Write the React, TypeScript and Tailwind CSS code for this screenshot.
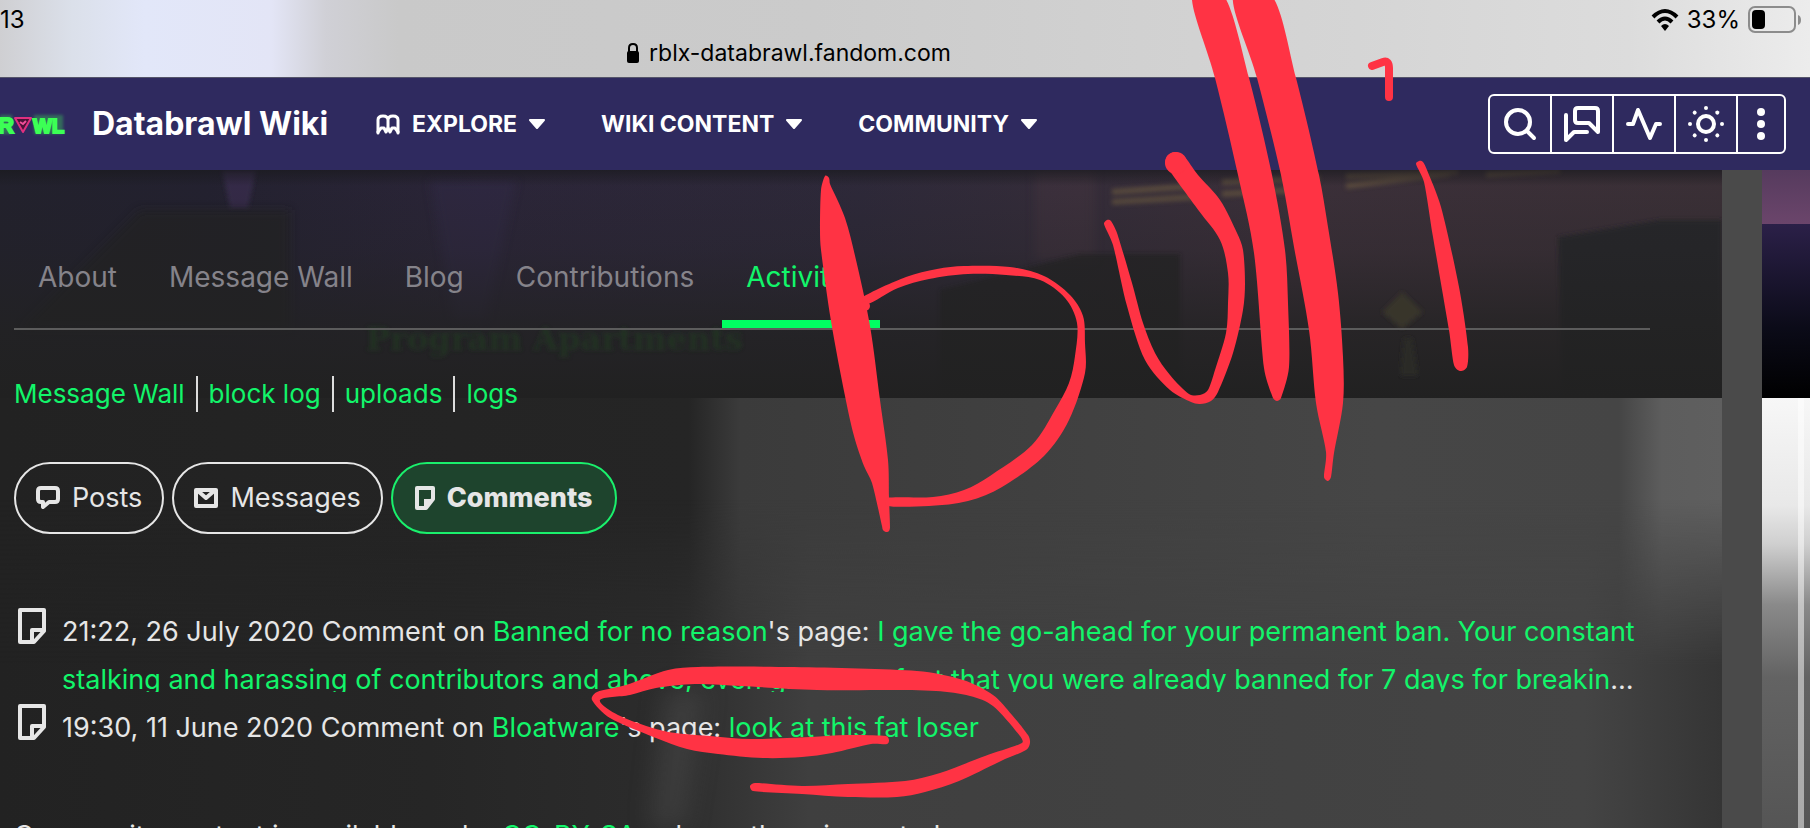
import type { ReactNode } from "react";

type Point = [number, number];

/** Closed Catmull-Rom curve through a list of points. */
function blob(pts: Point[]): string {
  const n = pts.length;
  let d = `M${pts[0][0]} ${pts[0][1]}`;
  for (let i = 0; i < n; i++) {
    const a = pts[(i + n - 1) % n];
    const b = pts[i];
    const c = pts[(i + 1) % n];
    const e = pts[(i + 2) % n];
    const len = Math.hypot(c[0] - b[0], c[1] - b[1]);
    const t1 = Math.min(1 / 6, (len / Math.max(1, Math.hypot(c[0] - a[0], c[1] - a[1]))) / 3);
    const t2 = Math.min(1 / 6, (len / Math.max(1, Math.hypot(e[0] - b[0], e[1] - b[1]))) / 3);
    d += `C${b[0] + (c[0] - a[0]) * t1} ${b[1] + (c[1] - a[1]) * t1} ${c[0] - (e[0] - b[0]) * t2} ${c[1] - (e[1] - b[1]) * t2} ${c[0]} ${c[1]}`;
  }
  return d + "Z";
}

const strokes: Point[][] = [
  // b, stem
  [[825, 176], [821, 190], [820, 230], [821, 250], [831, 321], [845, 396], [854, 436], [864, 466], [872, 483], [882, 526], [883, 530], [886, 532], [889, 531], [890, 527], [889, 498], [888, 460], [880, 400], [870, 326], [856, 260], [845, 218], [830, 184], [829, 178]],
  // b, bowl
  [[863, 297], [906, 277], [937, 269], [964, 266], [1010, 267], [1044, 276], [1070, 295], [1083, 316], [1085, 343], [1085, 373], [1069, 420], [1044, 456], [1002, 487], [968, 501], [929, 506], [887, 506], [887, 498], [933, 497], [964, 490], [990, 476], [1032, 445], [1055, 410], [1069, 383], [1075, 356], [1077, 323], [1065, 298], [1040, 280], [1006, 275], [968, 274], [929, 279], [898, 288], [868, 304]],
  // u
  [[1107, 220], [1104, 224], [1113, 245], [1127, 306], [1145, 360], [1170, 390], [1191, 402], [1200, 404], [1211, 401], [1218, 392], [1233, 353], [1243, 310], [1245, 283], [1243, 250], [1237, 233], [1220, 200], [1198, 175], [1184, 156], [1175, 152], [1167, 156], [1166, 165], [1199, 211], [1220, 240], [1228, 273], [1228, 303], [1226, 333], [1215, 370], [1208, 390], [1200, 395], [1189, 394], [1170, 375], [1155, 353], [1143, 323], [1132, 283], [1117, 233], [1111, 221]],
  // first l
  [[1192, -4], [1215, 78], [1238, 175], [1254, 253], [1264, 368], [1273, 398], [1277, 401], [1281, 398], [1289, 367], [1288, 303], [1285, 250], [1272, 175], [1249, 78], [1224, -4]],
  // second l
  [[1233, -4], [1257, 78], [1281, 175], [1294, 247], [1309, 330], [1316, 403], [1326, 452], [1324, 477], [1328, 481], [1331, 477], [1334, 453], [1343, 403], [1343, 357], [1338, 293], [1328, 227], [1319, 175], [1296, 78], [1272, -4]],
  // last stroke
  [[1416, 164], [1424, 182], [1433, 237], [1449, 330], [1454, 365], [1460, 371], [1467, 367], [1468, 347], [1459, 287], [1441, 207], [1427, 170], [1423, 162], [1419, 161]],
  // ring
  [[592, 700], [597, 692], [626, 685], [668, 670], [698, 667], [794, 667], [917, 671], [963, 680], [993, 695], [1012, 715], [1028, 735], [1030, 743], [1026, 750], [1001, 761], [959, 781], [925, 792], [897, 797], [848, 797], [802, 794], [753, 791], [750, 786], [755, 783], [802, 786], [848, 784], [905, 781], [940, 773], [985, 756], [1022, 743], [1020, 736], [993, 706], [970, 696], [936, 691], [886, 690], [817, 690], [741, 686], [695, 684], [656, 688], [630, 695], [600, 700], [618, 715], [664, 731], [710, 736], [752, 739], [810, 737], [848, 735], [886, 736], [889, 740], [887, 744], [871, 744], [832, 753], [802, 757], [763, 758], [718, 754], [687, 749], [656, 738], [610, 718]],
];

function Scribble() {
  return (
    <svg aria-hidden="true" className="pointer-events-none absolute top-0 left-0 z-20" width="1810" height="828" viewBox="0 0 1810 828">
      <g fill="#ff3344">
        {strokes.map((s, i) => (
          <path key={i} d={blob(s)} />
        ))}
        <circle cx="865" cy="306" r="5" />
        <circle cx="1176" cy="163" r="11" />
      </g>
      <path d="M1372 66L1383 62Q1389 60 1389 68V97" fill="none" stroke="#ff3344" strokeWidth="8" strokeLinecap="round" strokeLinejoin="round" />
    </svg>
  );
}

function Backdrop() {
  return (
    <svg aria-hidden="true" className="absolute top-0 left-0" width="1722" height="658" viewBox="0 170 1722 658" preserveAspectRatio="xMinYMin slice">
      <defs>
        <linearGradient id="sky" x1="0" x2="1" y1="0" y2="0">
          <stop offset="0" stopColor="#22212d" />
          <stop offset="0.12" stopColor="#232130" />
          <stop offset="0.28" stopColor="#2b2539" />
          <stop offset="0.5" stopColor="#2e293a" />
          <stop offset="0.75" stopColor="#3c303a" />
          <stop offset="1" stopColor="#3b3037" />
        </linearGradient>
        <linearGradient id="fade" x1="0" x2="0" y1="0" y2="1">
          <stop offset="0" stopColor="#222222" stopOpacity="0" />
          <stop offset="0.35" stopColor="#222222" stopOpacity="0.25" />
          <stop offset="0.7" stopColor="#222222" stopOpacity="0.8" />
          <stop offset="1" stopColor="#212121" />
        </linearGradient>
        <linearGradient id="topShade" x1="0" x2="0" y1="0" y2="1">
          <stop offset="0" stopColor="#1a1a1e" stopOpacity="0.7" />
          <stop offset="1" stopColor="#1a1a1e" stopOpacity="0" />
        </linearGradient>
        <linearGradient id="floor" x1="0" x2="1" y1="0" y2="0">
          <stop offset="0" stopColor="#222222" />
          <stop offset="0.4" stopColor="#252525" />
          <stop offset="0.43" stopColor="#3b3b3b" />
          <stop offset="0.6" stopColor="#404040" />
          <stop offset="0.8" stopColor="#464646" />
          <stop offset="0.94" stopColor="#454545" />
          <stop offset="0.965" stopColor="#5d5d5d" />
          <stop offset="1" stopColor="#5f5f5f" />
        </linearGradient>
        <linearGradient id="floorLow" x1="0" x2="1" y1="0" y2="0">
          <stop offset="0" stopColor="#222222" />
          <stop offset="0.25" stopColor="#262626" />
          <stop offset="0.39" stopColor="#2c2c2c" />
          <stop offset="0.47" stopColor="#3f3f3f" />
          <stop offset="0.75" stopColor="#424242" />
          <stop offset="0.92" stopColor="#444444" />
          <stop offset="1" stopColor="#353535" />
        </linearGradient>
        <linearGradient id="lowMask" x1="0" x2="0" y1="0" y2="1">
          <stop offset="0" stopColor="#000" />
          <stop offset="0.5" stopColor="#fff" />
        </linearGradient>
        <mask id="low">
          <rect x="0" y="500" width="1722" height="330" fill="url(#lowMask)" />
        </mask>
        <filter id="soft4" x="-20%" y="-60%" width="140%" height="220%">
          <feGaussianBlur stdDeviation="5" />
        </filter>
        <filter id="soft1" x="-10%" y="-30%" width="120%" height="160%">
          <feGaussianBlur stdDeviation="2" />
        </filter>
        <filter id="soft20" x="-100%" y="-20%" width="300%" height="140%">
          <feGaussianBlur stdDeviation="12" />
        </filter>
      </defs>
      <rect x="0" y="170" width="1722" height="228" fill="url(#sky)" />
      <path d="M222 170h34l-8 38h-18z" fill="#352b48" filter="url(#soft1)" />
      <path d="M430 180h86l-30 140h-32z" fill="#32294a" opacity="0.5" filter="url(#soft4)" />
      <path d="M1035 170h60v90h-60z" fill="#45353f" opacity="0.5" filter="url(#soft4)" />
      <path d="M140 210h150v120H20z" fill="#212123" opacity="0.7" filter="url(#soft4)" />
      <path d="M940 290L1080 254H1180V400H940z" fill="#212123" opacity="0.75" filter="url(#soft1)" />
      <path d="M1558 237L1660 220H1722V400H1562z" fill="#26252b" filter="url(#soft1)" />
      <g fill="none" stroke="#635340" strokeWidth="6" filter="url(#soft1)" opacity="0.8">
        <path d="M1112 192L1196 186M1112 202L1196 197M1222 182L1320 178M1222 194L1300 190M1346 176L1458 171M1346 186L1450 173M1486 174L1560 170" />
      </g>
      <rect x="0" y="170" width="1722" height="228" fill="url(#fade)" />
      <rect x="0" y="170" width="1722" height="16" fill="url(#topShade)" />
      <path d="M1402 292l21 20l-21 17l-20-17z" fill="#37352a" filter="url(#soft1)" />
      <path d="M1404 338l8 0l6 38h-18z" fill="#292b26" filter="url(#soft1)" />
      <text x="366" y="350" fill="#203a23" opacity="0.65" fontFamily="DejaVu Serif" fontWeight="700" fontSize="32" filter="url(#soft1)">
        Program Apartments
      </text>
      <rect x="0" y="398" width="1722" height="430" fill="url(#floor)" />
      <rect x="0" y="500" width="1722" height="328" fill="url(#floorLow)" mask="url(#low)" />
      <path d="M665 690L705 690L685 828H650z" fill="#505050" opacity="0.45" filter="url(#soft20)" />
    </svg>
  );
}

function NoteIcon({ bold = false }: { bold?: boolean }) {
  return bold ? (
    <svg width="20" height="24" viewBox="0 0 20 24" fill="none" stroke="currentColor" strokeWidth="4" strokeLinejoin="round" aria-hidden="true">
      <path d="M2 2H18V13L11 22H2Z" />
      <path d="M9 13H19L11 23H9Z" fill="currentColor" stroke="none" />
    </svg>
  ) : (
    <svg width="28" height="36" viewBox="0 0 28 36" fill="none" stroke="currentColor" strokeWidth="4" strokeLinejoin="round" aria-hidden="true">
      <path d="M2 2H26V23L16 34H2Z" />
      <path d="M14 33V22H26" />
    </svg>
  );
}

function PostIcon() {
  return (
    <svg width="24" height="24" viewBox="0 0 24 24" fill="none" stroke="currentColor" strokeWidth="4" strokeLinejoin="round" aria-hidden="true">
      <path d="M5 2H19Q22 2 22 5V13Q22 16 19 16H13L7 21V16H5Q2 16 2 13V5Q2 2 5 2Z" />
    </svg>
  );
}

function MailIcon() {
  return (
    <svg width="24" height="20" viewBox="0 0 24 20" fill="none" stroke="currentColor" strokeWidth="4" strokeLinejoin="round" aria-hidden="true">
      <path d="M2 2H22V18H2Z" />
      <path d="M4 3L12 10L20 3" />
    </svg>
  );
}

function Caret() {
  return (
    <svg width="16" height="10" viewBox="0 0 16 10" fill="currentColor" stroke="currentColor" strokeWidth="2" strokeLinejoin="round" aria-hidden="true">
      <path d="M1 1H15L8 9Z" />
    </svg>
  );
}

function BookIcon() {
  return (
    <svg width="24" height="21" viewBox="0 0 24 21" fill="none" stroke="currentColor" strokeWidth="3" strokeLinecap="round" strokeLinejoin="round" aria-hidden="true">
      <path d="M2 19V6Q2 2 7 2Q12 2 12 6V14M22 19V6Q22 2 17 2Q12 2 12 6" />
      <path d="M2 18L5 14H8L10 18L12 14L14 18L16 14H19L22 18" />
    </svg>
  );
}

function Logo() {
  return (
    <svg width="66" height="32" viewBox="0 0 66 32" role="img" aria-label="Databrawl">
      <defs>
        <filter id="glow" x="-20%" y="-20%" width="140%" height="140%">
          <feGaussianBlur stdDeviation="1.5" />
        </filter>
      </defs>
      <path d="M0 7H12V26H0zM34 7H63V26H34z" fill="#3cff55" opacity="0.3" filter="url(#glow)" />
      <g fill="#3cff55" stroke="#3cff55" strokeWidth="2" fontFamily="Liberation Sans" fontWeight="700">
        <text x="-2" y="25" fontSize="22">R</text>
        <text x="33" y="25" fontSize="20">W</text>
        <text x="52" y="25" fontSize="20">L</text>
      </g>
      <path d="M15 10H31L23 24Z" fill="#4a1238" stroke="#e0307f" strokeWidth="2" strokeLinejoin="round" />
      <path d="M20 14L23 16L26 13" fill="none" stroke="#f0509a" strokeWidth="2" />
    </svg>
  );
}

const tools: { label: string; icon: ReactNode }[] = [
  {
    label: "Search",
    icon: (
      <>
        <circle cx="16" cy="16" r="12" />
        <path d="M25 25L32 32" />
      </>
    ),
  },
  {
    label: "Discuss",
    icon: <path d="M14 2H31Q34 2 34 5V26L25 17H14Q11 17 11 14V5Q11 2 14 2ZM2 9V34L10 26H23" />,
  },
  { label: "Recent changes", icon: <path d="M2 18H7L12 4L24 32L30 18H34" /> },
  {
    label: "Theme",
    icon: (
      <>
        <circle cx="18" cy="18" r="8" />
        <g fill="currentColor" stroke="none">
          {[0, 45, 90, 135, 180, 225, 270, 315].map((a) => (
            <circle key={a} cx="18" cy="2" r="2" transform={`rotate(${a} 18 18)`} />
          ))}
        </g>
      </>
    ),
  },
];

function StatusBar() {
  return (
    <div className="flex h-[78px] flex-col justify-between border-b border-[#55556a] bg-[linear-gradient(90deg,#cfcfd2_0%,#dbe0ea_4%,#e2e7f9_8%,#e3e5f6_15%,#d0d0d6_18%,#c9c9c9_22%,#cbcbcb_45%,#d5d5d5_75%,#dcdcdc_90%,#ececec_100%)] pt-1 pr-2 pb-[10px] text-black">
      <div className="flex h-8 items-center justify-between">
        <span className="text-[24px]">13</span>
        <div className="flex items-center gap-2">
          <svg width="28" height="24" viewBox="0 0 28 24" fill="none" stroke="currentColor" strokeWidth="4" aria-hidden="true">
            <path d="M2 9Q14 -3 26 9" />
            <path d="M7 14Q14 7 21 14" />
            <path d="M10 18Q14 14 18 18L14 23Z" fill="currentColor" stroke="none" />
          </svg>
          <span className="text-[24px]">33%</span>
          <svg width="54" height="28" viewBox="0 0 54 28" aria-hidden="true">
            <rect x="1" y="1" width="46" height="25" rx="6" fill="none" stroke="#8c8c8c" strokeWidth="2" />
            <rect x="4" y="4" width="13" height="19" rx="4" fill="#000" />
            <path d="M50 9Q53 10 53 14Q53 18 50 19Z" fill="#8c8c8c" />
          </svg>
        </div>
      </div>
      <div className="mr-[224px] flex items-center gap-[10px] self-center text-[23px] leading-7">
        <svg width="12" height="20" viewBox="0 0 12 20" aria-hidden="true">
          <rect x="0" y="8" width="12" height="12" rx="2" />
          <path d="M2 9V5Q2 1 6 1Q10 1 10 5V9" fill="none" stroke="#000" strokeWidth="2" />
        </svg>
        rblx-databrawl.fandom.com
      </div>
    </div>
  );
}

function NavBar() {
  return (
    <header className="flex h-[92px] items-center justify-between bg-[#2f2a5f] pr-6 text-white">
      <div className="flex items-center">
        <Logo />
        <a href="#home" className="ml-[26px] text-[32px] font-bold">
          Databrawl Wiki
        </a>
        <nav className="ml-12 flex items-center gap-14 text-[23px] font-bold">
          <button className="flex items-center gap-3">
            <BookIcon />
            EXPLORE
            <Caret />
          </button>
          <button className="flex items-center gap-3">
            WIKI CONTENT
            <Caret />
          </button>
          <button className="flex items-center gap-3">
            COMMUNITY
            <Caret />
          </button>
        </nav>
      </div>
      <div className="flex h-[60px] divide-x-2 divide-white rounded-md border-2 border-white">
        {tools.map((t) => (
          <button key={t.label} aria-label={t.label} className="flex w-[62px] items-center justify-center">
            <svg width="36" height="36" viewBox="0 0 36 36" fill="none" stroke="currentColor" strokeWidth="4" strokeLinecap="round" strokeLinejoin="round" aria-hidden="true">
              {t.icon}
            </svg>
          </button>
        ))}
        <button aria-label="More" className="flex w-[46px] items-center justify-center">
          <svg width="8" height="32" viewBox="0 0 8 32" fill="currentColor" aria-hidden="true">
            <circle cx="4" cy="4" r="4" />
            <circle cx="4" cy="16" r="4" />
            <circle cx="4" cy="28" r="4" />
          </svg>
        </button>
      </div>
    </header>
  );
}

function Tabs() {
  return (
    <nav className="mt-8 flex gap-1 border-b-2 border-[#5c5c5c] text-[28px] leading-[54px] text-[#85838a]">
      {["About", "Message Wall", "Blog", "Contributions"].map((t) => (
        <a key={t} href="#tab" className="px-6 pt-12 pb-6">
          {t}
        </a>
      ))}
      <a href="#activity" aria-current="page" className="min-w-[158px] border-b-8 border-[#00ff62] px-6 pt-12 pb-4 text-[#12f56a]">
        Activity
      </a>
    </nav>
  );
}

function Bar() {
  return <span className="h-9 w-[2px] bg-[#dddddd]" />;
}

function FilterPill({ icon, label, active = false }: { icon: ReactNode; label: string; active?: boolean }) {
  return (
    <button
      aria-pressed={active}
      className={
        active
          ? "flex h-[72px] items-center gap-3 rounded-full border-2 border-[#1af06c] bg-[#1e442d] px-[22px] font-extrabold text-[#e6e6e6]"
          : "flex h-[72px] items-center gap-3 rounded-full border-2 border-[#e6e6e6] px-5 text-[#e6e6e6]"
      }
    >
      {icon}
      {label}
    </button>
  );
}

function Entry({ children }: { children: ReactNode }) {
  return (
    <li className="mb-3 flex max-h-[84px] gap-4 overflow-hidden pl-1">
      <span className="shrink-0">
        <NoteIcon />
      </span>
      <p className="min-w-0 flex-1 whitespace-nowrap">{children}</p>
    </li>
  );
}

function Link({ children }: { children: ReactNode }) {
  return (
    <a href="#page" className="text-[#12f56a]">
      {children}
    </a>
  );
}

export default function App() {
  return (
    <div className="relative flex h-screen flex-col overflow-hidden bg-[#242424] font-['Inter',sans-serif]">
      <StatusBar />
      <NavBar />
      <div className="flex min-h-0 flex-1">
        <main className="relative min-w-0 flex-1 overflow-hidden bg-[#404040] text-[27px] leading-[48px] text-[#e6e6e6]">
          <Backdrop />
          <div className="relative pr-[72px] pl-[14px]">
            <Tabs />
            <div className="mt-10 flex items-center gap-[11px] text-[26px]">
              <Link>Message Wall</Link>
              <Bar />
              <Link>block log</Link>
              <Bar />
              <Link>uploads</Link>
              <Bar />
              <Link>logs</Link>
            </div>
            <div className="mt-11 flex gap-2">
              <FilterPill icon={<PostIcon />} label="Posts" />
              <FilterPill icon={<MailIcon />} label="Messages" />
              <FilterPill icon={<NoteIcon bold />} label="Comments" active />
            </div>
            <ul className="mt-[74px]">
              <Entry>
                21:22, 26 July 2020 Comment on <Link>Banned for no reason</Link>'s page:{" "}
                <Link>
                  I gave the go-ahead for your permanent ban. Your constant
                  <br />
                  stalking and harassing of contributors and above, even given the fact that you were already banned for 7 days for breakin
                </Link>
                …
              </Entry>
              <Entry>
                19:30, 11 June 2020 Comment on <Link>Bloatware</Link>'s page: <Link>look at this fat loser</Link>
              </Entry>
            </ul>
            <p className="mt-15 whitespace-nowrap">
              Community content is available under <Link>CC-BY-SA</Link> unless otherwise noted.
            </p>
          </div>
        </main>
        <div className="w-10 bg-[#4a4a4a]" />
        <aside className="flex w-12 flex-col">
          <div className="h-[54px] bg-[linear-gradient(180deg,#563b5e,#6b456b)]" />
          <div className="h-[174px] bg-[linear-gradient(180deg,#2b2048,#0b0b18_60%,#000)]" />
          <div className="flex flex-1 justify-end bg-[linear-gradient(180deg,#f7f7f7_0%,#e8e8e8_25%,#cfcfcf_34%,#8a8a8a_48%,#636363_65%,#555555_100%)] pr-[6px]">
            <div className="w-[6px] bg-white/50" />
          </div>
        </aside>
      </div>
      <Scribble />
    </div>
  );
}
